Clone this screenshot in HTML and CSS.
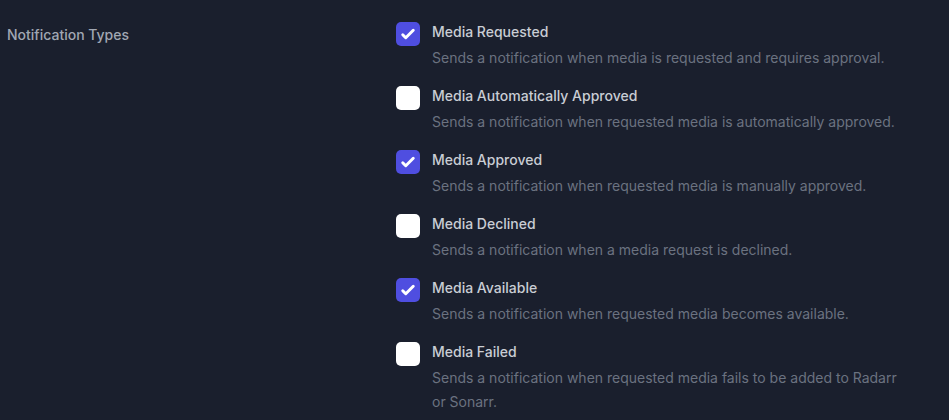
FILE: index.html
```html
<!DOCTYPE html>
<html lang="en">
<head>
    <meta charset="UTF-8">
    <meta name="viewport" content="width=device-width, initial-scale=1.0">
    <title>Notification Types</title>
    <link rel="stylesheet" href="styles.css">
</head>
<body>
    <div class="form-row">
        <div class="form-label">Notification Types</div>

        <div class="type-list">
            <label class="type-item">
                <span class="checkbox checked">
                    <svg viewBox="0 0 16 16" fill="#fff"><path d="M12.207 4.793a1 1 0 010 1.414l-5 5a1 1 0 01-1.414 0l-2-2a1 1 0 011.414-1.414L6.5 9.086l4.293-4.293a1 1 0 011.414 0z"/></svg>
                </span>
                <span class="type-text">
                    <span class="type-title">Media Requested</span>
                    <span class="type-desc">Sends a notification when media is requested and requires approval.</span>
                </span>
            </label>

            <label class="type-item">
                <span class="checkbox"></span>
                <span class="type-text">
                    <span class="type-title">Media Automatically Approved</span>
                    <span class="type-desc">Sends a notification when requested media is automatically approved.</span>
                </span>
            </label>

            <label class="type-item">
                <span class="checkbox checked">
                    <svg viewBox="0 0 16 16" fill="#fff"><path d="M12.207 4.793a1 1 0 010 1.414l-5 5a1 1 0 01-1.414 0l-2-2a1 1 0 011.414-1.414L6.5 9.086l4.293-4.293a1 1 0 011.414 0z"/></svg>
                </span>
                <span class="type-text">
                    <span class="type-title">Media Approved</span>
                    <span class="type-desc">Sends a notification when requested media is manually approved.</span>
                </span>
            </label>

            <label class="type-item">
                <span class="checkbox"></span>
                <span class="type-text">
                    <span class="type-title">Media Declined</span>
                    <span class="type-desc">Sends a notification when a media request is declined.</span>
                </span>
            </label>

            <label class="type-item">
                <span class="checkbox checked">
                    <svg viewBox="0 0 16 16" fill="#fff"><path d="M12.207 4.793a1 1 0 010 1.414l-5 5a1 1 0 01-1.414 0l-2-2a1 1 0 011.414-1.414L6.5 9.086l4.293-4.293a1 1 0 011.414 0z"/></svg>
                </span>
                <span class="type-text">
                    <span class="type-title">Media Available</span>
                    <span class="type-desc">Sends a notification when requested media becomes available.</span>
                </span>
            </label>

            <label class="type-item">
                <span class="checkbox"></span>
                <span class="type-text">
                    <span class="type-title">Media Failed</span>
                    <span class="type-desc">Sends a notification when requested media fails to be added to Radarr or Sonarr.</span>
                </span>
            </label>
        </div>
    </div>
</body>
</html>
```

FILE: styles.css
```css
* {
    margin: 0;
    padding: 0;
    box-sizing: border-box;
    font-family: 'Inter', 'Liberation Sans', sans-serif;
}

body {
    background-color: #1a1f2d;
    min-height: 100vh;
    padding: 22px 37px 0 7px;
    font-size: 14px;
}

/* 폼 행 */
.form-row {
    display: grid;
    grid-template-columns: 389px 1fr;
}

.form-label {
    margin-top: 2px;
    color: #a1a7b3;
    font-weight: 500;
    line-height: 22px;
}

/* 알림 종류 목록 */
.type-list {
    display: flex;
    flex-direction: column;
    gap: 16px;
}

.type-item {
    display: flex;
    align-items: flex-start;
    gap: 12px;
    cursor: pointer;
}

.checkbox {
    flex-shrink: 0;
    width: 24px;
    height: 24px;
    border-radius: 5px;
    background: #fff;
    display: flex;
}

.checkbox.checked {
    background: #4f4ee0;
}

.checkbox svg {
    width: 24px;
    height: 24px;
}

.type-text {
    display: flex;
    flex-direction: column;
}

.type-title {
    color: #c9cdd4;
    font-weight: 500;
    line-height: 20px;
}

.type-desc {
    margin-top: 4px;
    color: #6b7280;
    line-height: 24px;
}
```
